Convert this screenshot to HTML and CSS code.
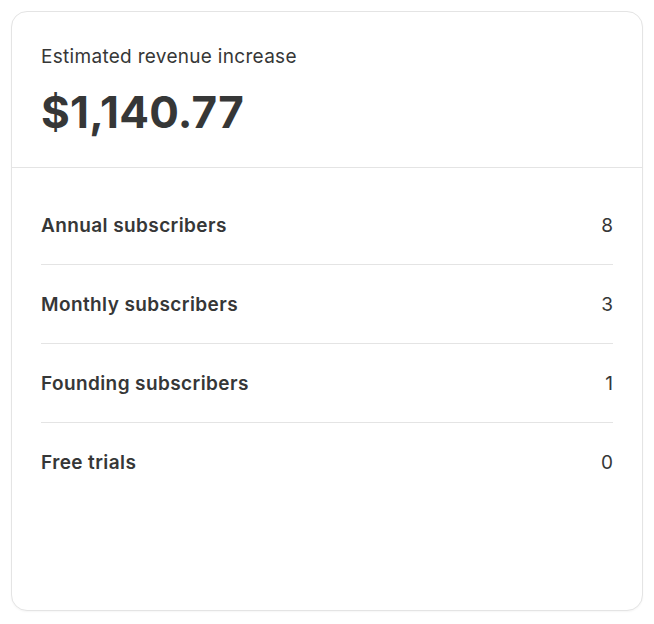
FILE: index.html
```html
<!DOCTYPE html>
<html>
<head>
<meta charset="utf-8">
<link rel="stylesheet" href="styles.css">
</head>
<body>
<div class="card">
  <div class="card-header">
    <div class="label">Estimated revenue increase</div>
    <div class="amount">$1,140.77</div>
  </div>
  <div class="card-body">
    <div class="row"><span class="name">Annual subscribers</span><span class="value">8</span></div>
    <div class="row"><span class="name">Monthly subscribers</span><span class="value">3</span></div>
    <div class="row"><span class="name">Founding subscribers</span><span class="value">1</span></div>
    <div class="row"><span class="name">Free trials</span><span class="value">0</span></div>
  </div>
</div>
</body>
</html>
```
FILE: styles.css
```css
html, body {
  margin: 0;
  padding: 0;
  background: #ffffff;
}
body {
  padding: 11px;
  font-family: Inter, "Noto Sans", sans-serif;
  color: #363737;
}
.card {
  box-sizing: border-box;
  width: 632px;
  height: 600px;
  border: 1px solid #e4e4e4;
  border-radius: 16px;
  box-shadow: 0 1px 2px rgba(0,0,0,0.04);
  background: #fff;
}
.card-header {
  padding: 33px 29px 28px;
  border-bottom: 1px solid #e4e4e4;
}
.label {
  font-size: 19px;
  line-height: 24px;
  letter-spacing: 0.3px;
  color: #363737;
}
.amount {
  margin-top: 16px;
  font-size: 44px;
  line-height: 54px;
  font-weight: 700;
  letter-spacing: 0.2px;
  color: #363737;
}
.card-body {
  padding: 18px 29px 0;
}
.row {
  height: 78px;
  display: flex;
  align-items: center;
  justify-content: space-between;
  border-bottom: 1px solid #e4e4e4;
  font-size: 19px;
}
.row:last-child {
  border-bottom: none;
}
.name {
  font-weight: 600;
  letter-spacing: 0.4px;
}
.value {
  font-weight: 400;
}
```
